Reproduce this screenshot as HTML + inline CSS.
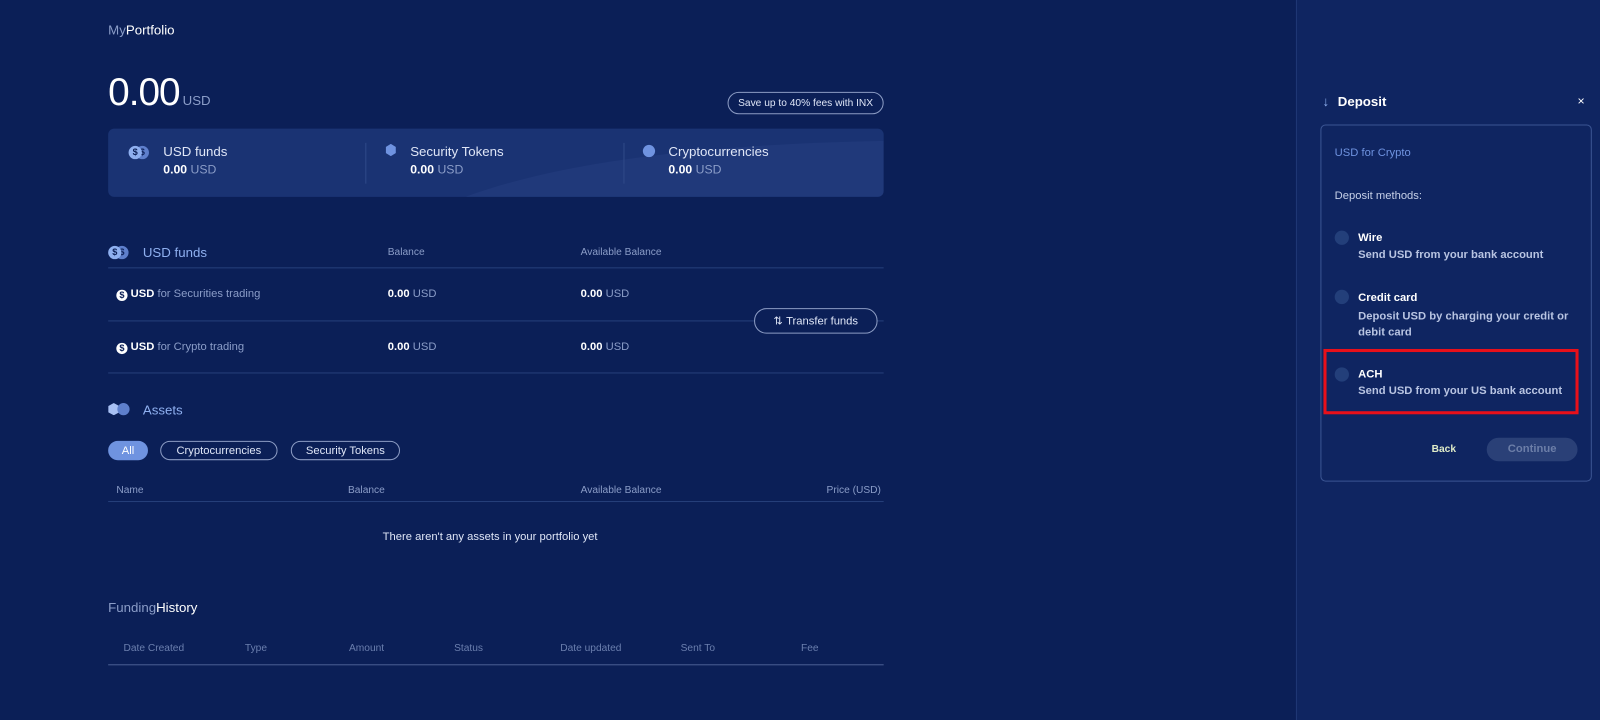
<!DOCTYPE html>
<html><head><meta charset="utf-8"><style>
*{box-sizing:border-box;margin:0;padding:0}
html,body{width:1600px;height:706px;background:#0b1f57;overflow:hidden}
body{font-family:"Liberation Sans",sans-serif;color:#fff;font-size:12px}
#w{position:absolute;left:0;top:0;width:1568px;height:692px;transform:scale(1.0204);transform-origin:0 0}
.a{position:absolute;white-space:nowrap}
.g{color:#8b9dc8}
.line{position:absolute;height:1px;background:#263f7a}
.pill{position:absolute;border:1px solid #8c9cc4;border-radius:12px;color:#dfe6f7;font-size:11px;display:flex;align-items:center;justify-content:center}
.rad{position:absolute;width:14px;height:14px;border-radius:50%;background:#233f7a}
.ic{display:inline-block;width:11px;height:11px;border-radius:50%;background:#fff;color:#0b1f57;font-size:9px;font-weight:bold;text-align:center;line-height:11px;vertical-align:-1px;margin-right:3px}
.dd{position:absolute;width:13px;height:13px;border-radius:50%;color:#0b1f57;font-size:9px;font-weight:bold;text-align:center;line-height:13px}
</style></head><body><div id="w">
<div class="a" style="left:106px;top:22px;font-size:13px"><span class="g">My</span>Portfolio</div>
<div class="a" style="left:106px;top:70px;font-size:38px;letter-spacing:-1px">0.00<span class="g" style="font-size:13px;letter-spacing:0;margin-left:3px">USD</span></div>
<div class="pill" style="left:713px;top:90px;width:153px;height:22px;font-size:10px">Save up to 40% fees with INX</div>
<div class="a" style="left:106px;top:126px;width:760px;height:67px;background:#1a3373;border-radius:6px;overflow:hidden">
<svg width="760" height="67" style="position:absolute;left:0;top:0"><path d="M350 67 C450 30 600 15 760 12 L760 67Z" fill="#20397a"/></svg>
<div class="line" style="left:252px;top:14px;width:1px;height:40px;background:#2f4a88"></div>
<div class="line" style="left:505px;top:14px;width:1px;height:40px;background:#2f4a88"></div>
<div class="dd" style="left:27px;top:17px;background:#5e7fcc">$</div>
<div class="dd" style="left:20px;top:17px;background:#8fb0f0">$</div>
<div class="a" style="left:54px;top:15px;font-size:13px;color:#dfe6f7">USD funds</div>
<div class="a" style="left:54px;top:33px;font-size:12px"><b>0.00</b> <span class="g">USD</span></div>
<div class="a" style="left:272px;top:15px;width:10px;height:12px;background:#6f93e0;clip-path:polygon(50% 0,100% 25%,100% 75%,50% 100%,0 75%,0 25%)"></div>
<div class="a" style="left:296px;top:15px;font-size:13px;color:#dfe6f7">Security Tokens</div>
<div class="a" style="left:296px;top:33px;font-size:12px"><b>0.00</b> <span class="g">USD</span></div>
<div class="a" style="left:524px;top:16px;width:12px;height:12px;border-radius:50%;background:#6f93e0"></div>
<div class="a" style="left:549px;top:15px;font-size:13px;color:#dfe6f7">Cryptocurrencies</div>
<div class="a" style="left:549px;top:33px;font-size:12px"><b>0.00</b> <span class="g">USD</span></div>
</div>
<div class="dd" style="left:113px;top:241px;background:#5e7fcc">$</div>
<div class="dd" style="left:106px;top:241px;background:#8fb0f0">$</div>
<div class="a" style="left:140px;top:240px;font-size:13px;color:#8fb0f0">USD funds</div>
<div class="a g" style="left:380px;top:242px;font-size:10px">Balance</div>
<div class="a g" style="left:569px;top:242px;font-size:10px">Available Balance</div>
<div class="line" style="left:106px;top:262px;width:760px"></div>
<div class="a" style="left:114px;top:282px;font-size:11px"><span class="ic">$</span><b>USD</b> <span class="g">for Securities trading</span></div>
<div class="a" style="left:380px;top:282px;font-size:11px"><b>0.00</b> <span class="g">USD</span></div>
<div class="a" style="left:569px;top:282px;font-size:11px"><b>0.00</b> <span class="g">USD</span></div>
<div class="line" style="left:106px;top:314px;width:760px"></div>
<div class="pill" style="left:739px;top:302px;width:121px;height:25px;font-size:11px;background:#0b1f57">⇅&nbsp;Transfer funds</div>
<div class="a" style="left:114px;top:334px;font-size:11px"><span class="ic">$</span><b>USD</b> <span class="g">for Crypto trading</span></div>
<div class="a" style="left:380px;top:334px;font-size:11px"><b>0.00</b> <span class="g">USD</span></div>
<div class="a" style="left:569px;top:334px;font-size:11px"><b>0.00</b> <span class="g">USD</span></div>
<div class="line" style="left:106px;top:365px;width:760px"></div>
<div class="a" style="left:106px;top:395px;width:11px;height:12px;background:#a8c0f4;clip-path:polygon(50% 0,100% 25%,100% 75%,50% 100%,0 75%,0 25%)"></div>
<div class="a" style="left:115px;top:395px;width:12px;height:12px;border-radius:50%;background:#5e7fcc"></div>
<div class="a" style="left:140px;top:394px;font-size:13px;color:#8fb0f0">Assets</div>
<div class="pill" style="left:106px;top:432px;width:39px;height:19px;background:#6f93e0;border-color:#6f93e0;color:#fff">All</div>
<div class="pill" style="left:157px;top:432px;width:115px;height:19px">Cryptocurrencies</div>
<div class="pill" style="left:285px;top:432px;width:107px;height:19px">Security Tokens</div>
<div class="a g" style="left:114px;top:475px;font-size:10px">Name</div>
<div class="a g" style="left:341px;top:475px;font-size:10px">Balance</div>
<div class="a g" style="left:569px;top:475px;font-size:10px">Available Balance</div>
<div class="a g" style="left:810px;top:475px;font-size:10px">Price (USD)</div>
<div class="line" style="left:106px;top:491px;width:760px"></div>
<div class="a" style="left:375px;top:520px;font-size:11px;color:#dfe6f7">There aren't any assets in your portfolio yet</div>
<div class="a" style="left:106px;top:588px;font-size:13px"><span class="g">Funding</span>History</div>
<div class="a" style="left:121px;top:630px;font-size:10px;color:#6b7fae">Date Created</div>
<div class="a" style="left:240px;top:630px;font-size:10px;color:#6b7fae">Type</div>
<div class="a" style="left:342px;top:630px;font-size:10px;color:#6b7fae">Amount</div>
<div class="a" style="left:445px;top:630px;font-size:10px;color:#6b7fae">Status</div>
<div class="a" style="left:549px;top:630px;font-size:10px;color:#6b7fae">Date updated</div>
<div class="a" style="left:667px;top:630px;font-size:10px;color:#6b7fae">Sent To</div>
<div class="a" style="left:785px;top:630px;font-size:10px;color:#6b7fae">Fee</div>
<div class="line" style="left:106px;top:651px;width:760px;background:#4a5f94"></div>

<div class="a" style="left:1270px;top:0;width:330px;height:706px;background:#0f2561;border-left:1px solid #1f3775"></div>
<div class="a" style="left:1296px;top:92px;font-size:13px;color:#8fb0f0">↓</div>
<div class="a" style="left:1311px;top:92px;font-size:13px;font-weight:bold">Deposit</div>
<div class="a" style="left:1546px;top:92px;font-size:12px">×</div>
<div class="a" style="left:1294px;top:122px;width:266px;height:350px;border:1px solid #3b5593;border-radius:5px"></div>
<div class="a" style="left:1308px;top:144px;font-size:11px;color:#6f93e0">USD for Crypto</div>
<div class="a" style="left:1308px;top:186px;font-size:11px;color:#c6d0e8">Deposit methods:</div>
<div class="rad" style="left:1308px;top:226px"></div>
<div class="a" style="left:1331px;top:227px;font-size:11px;font-weight:bold">Wire</div>
<div class="a" style="left:1331px;top:244px;font-size:11px;font-weight:bold;color:#b8c4e2">Send USD from your bank account</div>
<div class="rad" style="left:1308px;top:284px"></div>
<div class="a" style="left:1331px;top:286px;font-size:11px;font-weight:bold">Credit card</div>
<div class="a" style="left:1331px;top:302px;font-size:11px;font-weight:bold;color:#b8c4e2;line-height:16px;white-space:normal;width:210px">Deposit USD by charging your credit or debit card</div>
<div class="a" style="left:1297px;top:342px;width:250px;height:64px;border:3px solid #e8101a"></div>
<div class="rad" style="left:1308px;top:360px"></div>
<div class="a" style="left:1331px;top:361px;font-size:11px;font-weight:bold">ACH</div>
<div class="a" style="left:1331px;top:377px;font-size:11px;font-weight:bold;color:#b8c4e2">Send USD from your US bank account</div>
<div class="a" style="left:1403px;top:435px;font-size:10px;font-weight:bold;color:#e0ecc8">Back</div>
<div class="a" style="left:1457px;top:429px;width:89px;height:23px;border-radius:12px;background:#2a4077;color:#6c7ea8;font-size:11px;font-weight:bold;text-align:center;line-height:23px">Continue</div>
</div></body></html>
